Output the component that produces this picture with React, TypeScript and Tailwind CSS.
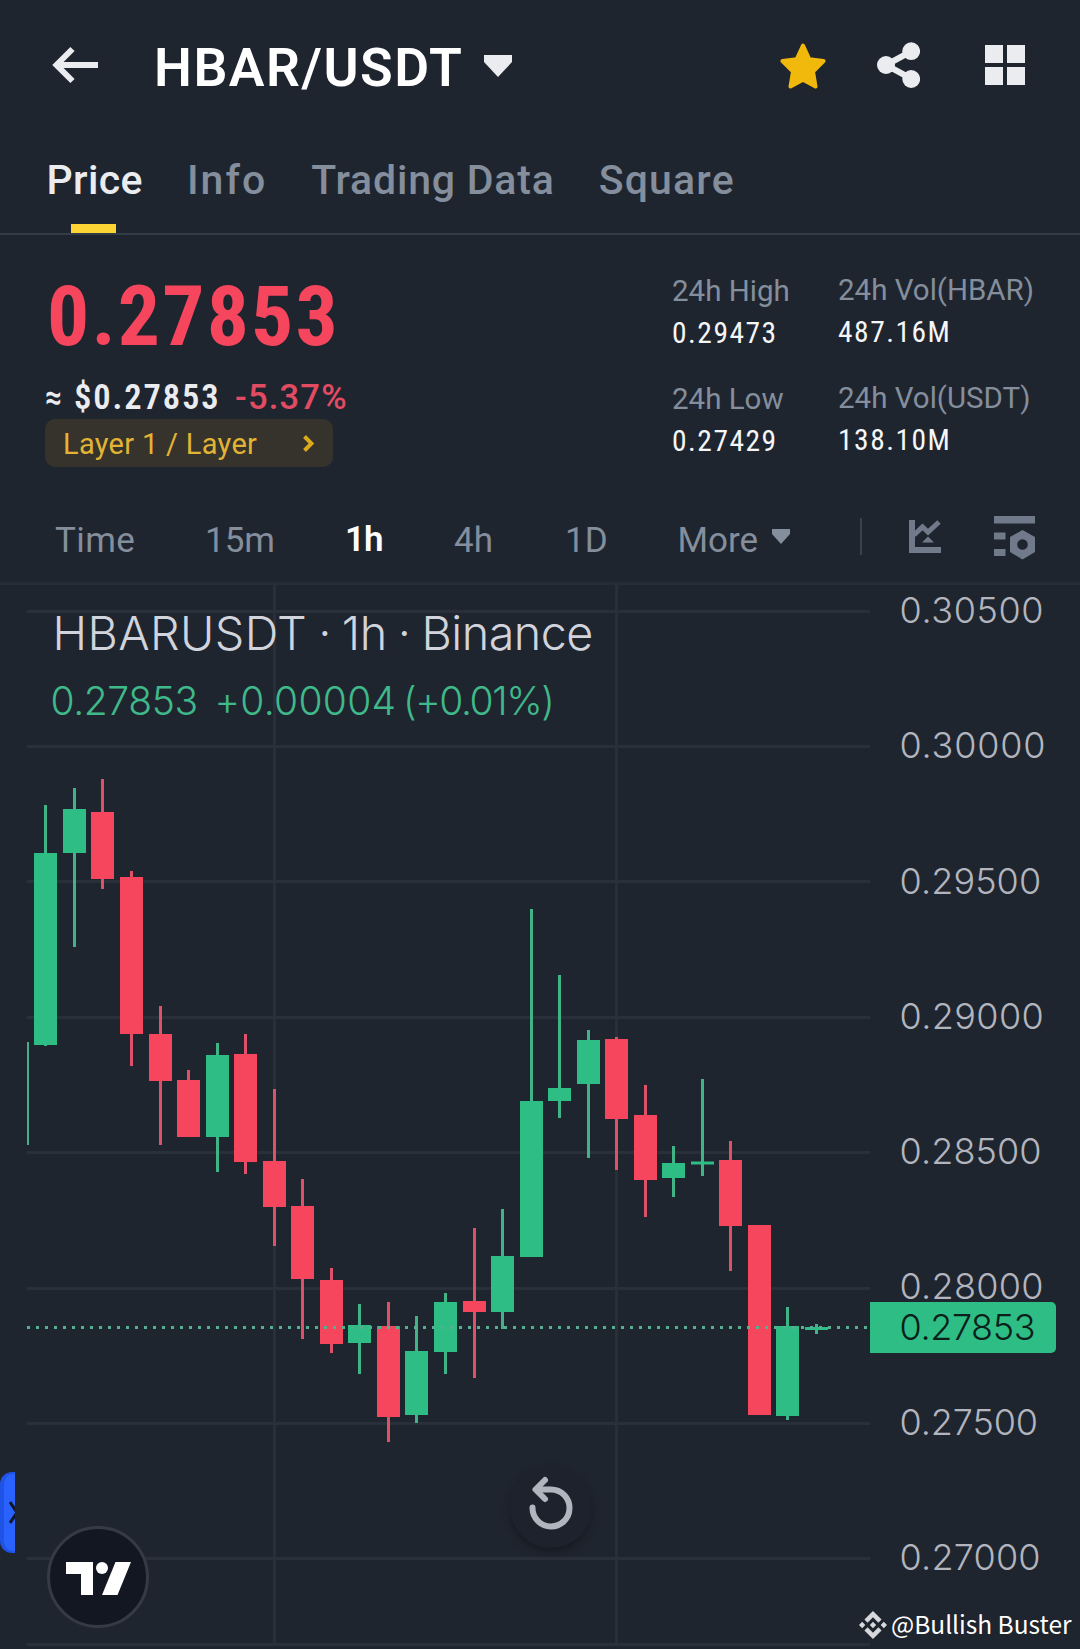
import React from "react";
import { SiBinance } from "react-icons/si";

const GREEN = "#2ebd85";
const RED = "#f6465d";

type Candle = {
  x: number;
  top: number;
  bottom: number;
  high: number;
  low: number;
  up: boolean;
};

const candles: Candle[] = [
  { x: 34, top: 853, bottom: 1045, high: 805, low: 1046, up: true },
  { x: 63, top: 809, bottom: 853, high: 788, low: 947, up: true },
  { x: 91, top: 812, bottom: 879, high: 779, low: 889, up: false },
  { x: 120, top: 877, bottom: 1034, high: 871, low: 1066, up: false },
  { x: 149, top: 1034, bottom: 1081, high: 1006, low: 1145, up: false },
  { x: 177, top: 1080, bottom: 1137, high: 1070, low: 1137, up: false },
  { x: 206, top: 1055, bottom: 1137, high: 1043, low: 1172, up: true },
  { x: 234, top: 1054, bottom: 1162, high: 1034, low: 1174, up: false },
  { x: 263, top: 1161, bottom: 1207, high: 1089, low: 1246, up: false },
  { x: 291, top: 1206, bottom: 1279, high: 1179, low: 1339, up: false },
  { x: 320, top: 1280, bottom: 1344, high: 1268, low: 1353, up: false },
  { x: 348, top: 1325, bottom: 1343, high: 1304, low: 1374, up: true },
  { x: 377, top: 1326, bottom: 1417, high: 1302, low: 1442, up: false },
  { x: 405, top: 1351, bottom: 1415, high: 1316, low: 1423, up: true },
  { x: 434, top: 1302, bottom: 1352, high: 1293, low: 1374, up: true },
  { x: 463, top: 1301, bottom: 1312, high: 1228, low: 1378, up: false },
  { x: 491, top: 1256, bottom: 1312, high: 1209, low: 1329, up: true },
  { x: 520, top: 1101, bottom: 1257, high: 909, low: 1257, up: true },
  { x: 548, top: 1088, bottom: 1101, high: 975, low: 1118, up: true },
  { x: 577, top: 1040, bottom: 1084, high: 1030, low: 1158, up: true },
  { x: 605, top: 1039, bottom: 1119, high: 1037, low: 1170, up: false },
  { x: 634, top: 1115, bottom: 1180, high: 1085, low: 1217, up: false },
  { x: 662, top: 1163, bottom: 1178, high: 1146, low: 1197, up: true },
  { x: 691, top: 1161.5, bottom: 1164.5, high: 1079, low: 1176, up: true },
  { x: 719, top: 1160, bottom: 1226, high: 1141, low: 1271, up: false },
  { x: 748, top: 1225, bottom: 1415, high: 1225, low: 1415, up: false },
  { x: 776, top: 1326, bottom: 1416, high: 1307, low: 1420, up: true },
  { x: 805, top: 1327, bottom: 1330, high: 1324, low: 1334, up: true },
];

const gridY = [611.5, 746.5, 881.5, 1017.5, 1152.5, 1288.5, 1423.5, 1558.5, 1644.5];

const axisLabels = [
  { text: "0.30500", spacing: "tracking-[0.6px]" },
  { text: "0.30000", spacing: "tracking-[0.8px]" },
  { text: "0.29500", spacing: "tracking-[0.1px]" },
  { text: "0.29000", spacing: "tracking-[0.4px]" },
  { text: "0.28500", spacing: "tracking-[0.1px]" },
  { text: "0.28000", spacing: "tracking-[0.3px]" },
  { text: "0.27500", spacing: "tracking-[-0.1px]" },
  { text: "0.27000", spacing: "tracking-[0.2px]" },
];

function Header() {
  return (
    <header className="flex h-[134px] items-center pl-[52px] pr-[55px]">
      <svg className="-mt-1 h-[38px] w-[46px] shrink-0" viewBox="0 0 46 38" fill="none" stroke="#eaecef" strokeWidth="6">
        <path d="M3 19H46" />
        <path d="M20.500 3L4.500 19L20.500 35" />
      </svg>
      <h1 className="mt-0.5 ml-[56px] text-[53.5px] leading-none font-semibold tracking-[1.5px] text-white">HBAR/USDT</h1>
      <svg className="-mt-0.5 ml-[21px] h-[22px] w-[28px] shrink-0" viewBox="0 0 28 22">
        <path d="M0 0H28V7L14 22L0 7Z" fill="#eaecef" />
      </svg>
      <div className="ml-auto flex items-center">
        <svg className="-mt-0.5 h-[48px] w-[46px]" viewBox="0 0 46 48">
          <path
            d="M23 3.500L29.300 17.300L43.500 19L33 29.500L35.500 44.500L23 37.800L10.500 44.500L13 29.500L2.500 19L16.700 17.300Z"
            fill="#f0b90b"
            stroke="#f0b90b"
            strokeWidth="4"
            strokeLinejoin="round"
          />
        </svg>
        <svg className="-mt-1 ml-[51px] h-[48px] w-[43px]" viewBox="0 0 43 48" fill="#eaecef">
          <path d="M34 10.500L9 24L34 37.500" fill="none" stroke="#eaecef" strokeWidth="6" />
          <circle cx="34.200" cy="10.200" r="8.900" />
          <circle cx="9" cy="24" r="9" />
          <circle cx="34.200" cy="38" r="8.900" />
        </svg>
        <div className="-mt-1 ml-[65px] grid grid-cols-2 gap-1">
          <i className="size-[18px] bg-[#eaecef]" />
          <i className="size-[18px] bg-[#eaecef]" />
          <i className="size-[18px] bg-[#eaecef]" />
          <i className="size-[18px] bg-[#eaecef]" />
        </div>
      </div>
    </header>
  );
}

function Tabs() {
  return (
    <nav className="flex h-[101px] gap-[44px] border-b-2 border-[#333b47] pl-[46.5px] text-[41px] leading-[92px] font-medium text-[#848e9c]">
      <div className="relative tracking-[0.4px] text-[#eaecef]">
        Price
        <span className="absolute top-[90px] left-[24.5px] h-[9px] w-[45px] bg-[#fcd535]" />
      </div>
      <div className="tracking-[2px]">Info</div>
      <div className="tracking-[0.8px]">Trading Data</div>
      <div className="tracking-[1.2px]">Square</div>
    </nav>
  );
}

function Stat({ label, value }: { label: string; value: string }) {
  return (
    <div className="h-[108px] text-[29.5px] leading-[42px]">
      <div className="text-[#848e9c]">{label}</div>
      <div className="tracking-[1.5px] text-[#f5f6f8] [font-stretch:87%]">{value}</div>
    </div>
  );
}

function Summary() {
  return (
    <section className="flex h-[263px] pl-[45px]">
      <div className="w-[627px]">
        <div className="mt-[32px] pl-0.5 text-[83.500px] leading-[100px] font-bold tracking-[2.200px] text-[#f6465d] [font-stretch:75%]">
          0.27853
        </div>
        <div className="mt-[8px] flex text-[34.5px] leading-[44px] font-semibold whitespace-nowrap">
          <span className="w-[190px] tracking-[1.9px] text-[#eaecef] [font-stretch:87%]">≈ $0.27853</span>
          <span className="font-medium tracking-[1.2px] text-[#e24b62]">-5.37%</span>
        </div>
        <div className="flex h-[48px] w-[288px] items-center justify-between rounded-[10px] bg-[#35332b] pr-[19px] pl-[18px] text-[29px] leading-none tracking-[0.3px] text-[#e3b434]">
          <span className="mt-0.5">Layer 1 / Layer</span>
          <svg className="h-[17px] w-[11px]" viewBox="0 0 11 17" fill="none" stroke="#dba91c" strokeWidth="4">
            <path d="M1.500 1.500L8.500 8.500L1.500 15.500" />
          </svg>
        </div>
      </div>
      <div className="mt-[34.5px] w-[166px]">
        <Stat label="24h High" value="0.29473" />
        <Stat label="24h Low" value="0.27429" />
      </div>
      <div className="mt-[33.5px]">
        <Stat label="24h Vol(HBAR)" value="487.16M" />
        <Stat label="24h Vol(USDT)" value="138.10M" />
      </div>
    </section>
  );
}

function Toolbar() {
  return (
    <div className="flex h-[84px] items-center pl-[55px] text-[35px] leading-none text-[#848e9c]">
      <span className="w-[150px] tracking-[0.4px]">Time</span>
      <span className="w-[140px]">15m</span>
      <span className="-mt-0.5 w-[109px] font-semibold tracking-[-1px] text-white">1h</span>
      <span className="w-[111px]">4h</span>
      <span className="w-[112.5px]">1D</span>
      <span>More</span>
      <svg className="-mt-2 ml-[14px] h-[15px] w-[18px]" viewBox="0 0 18 15">
        <path d="M0 0H18V5L9 15L0 5Z" fill="#848e9c" />
      </svg>
      <span className="-mt-2 ml-[69.500px] h-[37px] w-[2.500px] bg-[#3a414d]" />
      <svg className="-mt-2 ml-[46.5px] h-[33px] w-[32px]" viewBox="0 0 32 33" fill="#707a8a">
        <path d="M0 0H6V27H32V33H0Z" />
        <path d="M5 15L13.500 7L19 12L30 2" fill="none" stroke="#707a8a" strokeWidth="5" />
        <path d="M19 16.500L25 22.500H13Z" />
      </svg>
      <svg className="-mt-1 ml-[53.500px] h-[44px] w-[41px]" viewBox="0 0 41 44" fill="#707a8a">
        <path d="M0 0H41V7.500H0Z" />
        <path d="M0 16.500H11.500V23.500H0Z" />
        <path d="M0 33H11.500V40H0Z" />
        <path
          fillRule="evenodd"
          d="M28.500 14L41 21V36L28.500 43.500L16 36V21ZM28.500 23.200A5.300 5.300 0 1 0 28.500 33.800A5.300 5.300 0 1 0 28.500 23.200Z"
        />
      </svg>
    </div>
  );
}

function CandleChart() {
  return (
    <svg className="h-[1067px] w-[870px] shrink-0" viewBox="0 582 870 1067">
      {gridY.map((y) => (
        <path key={y} d={`M27 ${y}H870`} stroke="#2a303a" strokeWidth="2.800" />
      ))}
      <path d="M274.500 582V1643M616.500 582V1643" stroke="#2a303a" strokeWidth="2.800" />
      <path d="M27 1042H29V1145H27Z" fill="#48ac89" />
      {candles.map((c) => (
        <g key={c.x}>
          <rect x={c.x + 10} y={c.high} width={3} height={c.low - c.high} fill={c.up ? "#40b487" : "#dd5169"} />
          <rect x={c.x} y={c.top} width={23} height={c.bottom - c.top} fill={c.up ? GREEN : RED} />
        </g>
      ))}
      <path d="M27 1327.500H870" stroke="#55b08f" strokeWidth="3" strokeDasharray="3 6" />
    </svg>
  );
}

function Chart() {
  return (
    <section className="relative flex h-[1067px] overflow-hidden font-['Inter',sans-serif] font-light">
      <CandleChart />
      <div className="flex flex-col gap-[99.25px] pt-[10px] pl-[29.500px] text-[36px] leading-[36px] text-[#b2b5be]">
        {axisLabels.map((l) => (
          <div key={l.text} className={l.spacing}>
            {l.text}
          </div>
        ))}
      </div>
      <div className="absolute top-0 left-0 h-[3px] w-full bg-[#272d37]" />
      <div className="absolute top-[720px] left-[870px] h-[51px] w-[186px] rounded-r-[5px] bg-[#2ebd85] pl-[29.500px] text-[36px] leading-[51px] tracking-[-0.4px] text-[#0c1f1a]">
        0.27853
      </div>
      <div className="absolute top-[26px] left-[52.500px] whitespace-nowrap">
        <div className="text-[46.7px] leading-[50px] tracking-[-0.5px] text-[#d1d4dc]">
          <span className="tracking-[0.4px]">HBARUSDT</span>
          <span className="[word-spacing:-1.6px]">{" · 1h · "}</span>
          <span>Binance</span>
        </div>
        <div className="mt-[18px] flex text-[39px] leading-[50px] text-[#3fb98a]">
          <span className="-ml-0.5 w-[164px] tracking-[-0.4px]">0.27853</span>
          <span className="w-[188.500px] tracking-[0.3px]">+0.00004</span>
          <span className="tracking-[-1.400px]">(+0.01%)</span>
        </div>
      </div>
      <div className="absolute top-[884px] left-[510px] size-[82px] rounded-full bg-[#1e222d] shadow-[0_4px_8px_rgba(0,0,0,0.3)]">
        <svg className="size-full" viewBox="510.500 1466.500 82 82" fill="none" stroke="#b2b5be" strokeWidth="6" strokeLinecap="round">
          <path d="M533 1508A18.500 18.500 0 1 0 551.500 1490H537" />
          <path d="M545.500 1480.500L536 1490L545.500 1499.500" strokeLinejoin="round" />
        </svg>
      </div>
      <div className="absolute top-[890px] left-0 h-[81px] w-[15px] overflow-hidden rounded-l-[12px] border-y-2 border-l-4 border-[#1e53e5] bg-[#2962ff]">
        <svg className="mt-[27px] ml-[5px] h-[23px] w-[12px]" viewBox="0 0 12 23" fill="none" stroke="#131722" strokeWidth="3">
          <path d="M1 1L8 11.500L1 22" />
        </svg>
      </div>
      <div className="absolute top-[944px] left-[47px] flex size-[102px] items-center justify-center rounded-full border-[3px] border-[#363a45] bg-[#131722]">
        <svg className="mt-[3px] h-[33px] w-[65px]" viewBox="0 0 65 33" fill="white">
          <path d="M0 0H27V33H15V12H0Z" />
          <circle cx="36" cy="6" r="6" />
          <path d="M49.500 0H65L51.500 33H36Z" />
        </svg>
      </div>
      <div className="absolute top-[1027.500px] left-[859px] flex h-[30px] items-center gap-[4px] font-['Noto_Sans_CJK_SC',sans-serif] text-[24.500px] leading-[30px] font-normal whitespace-nowrap text-white">
        <SiBinance className="size-[28px] text-[#d6d8db]" />
        <span className="-mt-0.5">@Bullish Buster</span>
      </div>
    </section>
  );
}

export default function App() {
  return (
    <main className="h-[1649px] w-[1080px] overflow-hidden bg-[#1f252f] font-['Roboto',sans-serif]">
      <Header />
      <Tabs />
      <Summary />
      <Toolbar />
      <Chart />
    </main>
  );
}
